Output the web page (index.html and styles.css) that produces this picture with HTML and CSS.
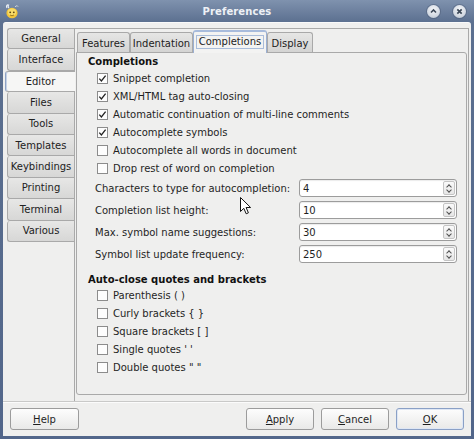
FILE: index.html
```html
<!DOCTYPE html>
<html>
<head>
<meta charset="utf-8">
<link rel="stylesheet" href="styles.css">
</head>
<body>
<div class="window">
  <div class="titlebar">
    <div class="tb-left">
      <svg class="app-icon" width="14" height="15" viewBox="0 0 14 15">
        <path d="M2 4 C1 2 2 0.5 3.5 1 C3 2 3 3 4 4" fill="none" stroke="#e8eef5" stroke-width="1.2"/>
        <path d="M10 3 C11 1.5 12.5 1.5 13 2.5" fill="none" stroke="#d8dee8" stroke-width="1"/>
        <ellipse cx="7" cy="9" rx="5.6" ry="5.2" fill="#f2c53a"/>
        <ellipse cx="7" cy="8" rx="4.2" ry="3.6" fill="#f8dc6a"/>
        <circle cx="5.2" cy="8.3" r="0.9" fill="#5a4410"/>
        <circle cx="8.8" cy="8.3" r="0.9" fill="#5a4410"/>
        <path d="M5 11 Q7 12.5 9 11" fill="none" stroke="#8a6a18" stroke-width="0.8"/>
      </svg>
    </div>
    <div class="title">Preferences</div>
    <div class="tb-right">
      <span class="wbtn">
        <svg width="13" height="13" viewBox="0 0 13 13"><path d="M4 7.5 L6.5 5 L9 7.5" fill="none" stroke="#3c4858" stroke-width="1.6"/></svg>
      </span>
      <span class="wbtn">
        <svg width="13" height="13" viewBox="0 0 13 13"><path d="M4.3 4.3 L8.7 8.7 M8.7 4.3 L4.3 8.7" fill="none" stroke="#3c4858" stroke-width="1.7"/></svg>
      </span>
    </div>
  </div>

  <div class="client">
    <div class="main">
      <div class="vtabs">
        <div class="vtab">General</div>
        <div class="vtab">Interface</div>
        <div class="vtab vtab-active">Editor</div>
        <div class="vtab">Files</div>
        <div class="vtab">Tools</div>
        <div class="vtab">Templates</div>
        <div class="vtab">Keybindings</div>
        <div class="vtab">Printing</div>
        <div class="vtab">Terminal</div>
        <div class="vtab">Various</div>
      </div>
      <div class="page">
        <div class="htabs">
          <div class="htab w-features">Features</div>
          <div class="htab w-indent">Indentation</div>
          <div class="htab htab-active w-compl"><span class="focus">Completions</span></div>
          <div class="htab w-display">Display</div>
        </div>
        <div class="panel">
          <div class="heading h1">Completions</div>
          <div class="crow"><span class="cb"><svg width="11" height="11" viewBox="0 0 11 11"><path d="M2.3 5.6 L4.4 8 L8.6 2.6" fill="none" stroke="#222" stroke-width="1.3"/></svg></span>Snippet completion</div>
          <div class="crow"><span class="cb"><svg width="11" height="11" viewBox="0 0 11 11"><path d="M2.3 5.6 L4.4 8 L8.6 2.6" fill="none" stroke="#222" stroke-width="1.3"/></svg></span>XML/HTML tag auto-closing</div>
          <div class="crow"><span class="cb"><svg width="11" height="11" viewBox="0 0 11 11"><path d="M2.3 5.6 L4.4 8 L8.6 2.6" fill="none" stroke="#222" stroke-width="1.3"/></svg></span>Automatic continuation of multi-line comments</div>
          <div class="crow"><span class="cb"><svg width="11" height="11" viewBox="0 0 11 11"><path d="M2.3 5.6 L4.4 8 L8.6 2.6" fill="none" stroke="#222" stroke-width="1.3"/></svg></span>Autocomplete symbols</div>
          <div class="crow"><span class="cb"></span>Autocomplete all words in document</div>
          <div class="crow"><span class="cb"></span>Drop rest of word on completion</div>

          <div class="srow"><span class="slabel">Characters to type for autocompletion:</span><span class="spin"><span class="sval">4</span><span class="sarrows"><span class="sup"></span><span class="sdown"></span></span></span></div>
          <div class="srow"><span class="slabel">Completion list height:</span><span class="spin"><span class="sval">10</span><span class="sarrows"><span class="sup"></span><span class="sdown"></span></span></span></div>
          <div class="srow"><span class="slabel">Max. symbol name suggestions:</span><span class="spin"><span class="sval">30</span><span class="sarrows"><span class="sup"></span><span class="sdown"></span></span></span></div>
          <div class="srow"><span class="slabel">Symbol list update frequency:</span><span class="spin"><span class="sval">250</span><span class="sarrows"><span class="sup"></span><span class="sdown"></span></span></span></div>

          <div class="heading h2">Auto-close quotes and brackets</div>
          <div class="crow"><span class="cb"></span>Parenthesis ( )</div>
          <div class="crow"><span class="cb"></span>Curly brackets { }</div>
          <div class="crow"><span class="cb"></span>Square brackets [ ]</div>
          <div class="crow"><span class="cb"></span>Single quotes ' '</div>
          <div class="crow"><span class="cb"></span>Double quotes " "</div>
        </div>
      </div>
    </div>
    <div class="sep"></div>
    <div class="buttons">
      <div class="btn"><u>H</u>elp</div>
      <div class="spacer"></div>
      <div class="btn"><u>A</u>pply</div>
      <div class="btn"><u>C</u>ancel</div>
      <div class="btn btn-default"><u>O</u>K</div>
    </div>
  </div>

  <svg class="cursor" width="12" height="18" viewBox="0 0 12 18">
    <path d="M0.5 0.5 L0.5 14.5 L3.8 11.3 L6.2 16.8 L8.4 15.8 L6.1 10.5 L10.6 10.5 Z" fill="#fff" stroke="#111" stroke-width="1" stroke-linejoin="round"/>
  </svg>
</div>
</body>
</html>
```
FILE: styles.css
```css
* { box-sizing: border-box; }
html, body { margin: 0; padding: 0; }
body {
  width: 474px;
  height: 439px;
  overflow: hidden;
  font-family: "DejaVu Sans", "Liberation Sans", sans-serif;
  font-size: 10px;
  color: #1f1f1f;
  background: #50648a;
}
.window {
  width: 474px;
  height: 439px;
  position: relative;
  display: flex;
  flex-direction: column;
  background: linear-gradient(#7f92ae 0px, #5c7090 22px, #52668a 100%);
}
.titlebar {
  height: 22px;
  flex: none;
  display: grid;
  grid-template-columns: 1fr auto 1fr;
  align-items: center;
}
.tb-left { padding-left: 5px; display: flex; align-items: center; }
.app-icon { display: block; margin-top: 1px; }
.title {
  font-weight: bold;
  color: #eef1f6;
  font-size: 10px;
  letter-spacing: 0.1px;
  padding-top: 1px;
}
.tb-right {
  display: flex;
  justify-content: flex-end;
  gap: 13px;
  padding-right: 8px;
}
.wbtn {
  width: 13px;
  height: 13px;
  border-radius: 50%;
  background: radial-gradient(circle at 50% 35%, #f4f6f9 0%, #d4dae3 60%, #aeb8c6 100%);
  box-shadow: 0 0 0 1px rgba(60,75,100,0.35);
  display: block;
}
.wbtn svg { display: block; }

.client {
  flex: 1;
  margin: 0 3px 3px 3px;
  background: #efefee;
  border-top: 1px solid #f9f9f9;
  border-radius: 3px 3px 0 0;
  display: flex;
  flex-direction: column;
}
.main {
  display: flex;
  margin: 5px 2px 0 4px;
  height: 373px;
}
.vtabs {
  width: 67px;
  flex: none;
  display: flex;
  flex-direction: column;
}
.vtab {
  height: 21.4px;
  display: flex;
  align-items: center;
  justify-content: center;
  border: 1px solid #a9a9a9;
  border-top: none;
  border-right: none;
  border-radius: 3px 0 0 3px;
  background: linear-gradient(#e7e7e6, #d7d7d6);
  color: #222;
}
.vtab:first-child { border-top: 1px solid #a9a9a9; }
.vtab-active {
  position: relative;
  z-index: 2;
  margin-left: -2px;
  margin-right: -1px;
  background: #f6f6f5;
  border-left: 1px solid #8ea2c4;
  border-top: 1px solid #a9a9a9;
  box-shadow: inset 1px 0 0 #c5d2e6;
}
.page {
  flex: 1;
  border: 1px solid #a9a9a9;
  border-bottom: none;
  padding: 1px 1px 6px 1px;
  display: flex;
  flex-direction: column;
}
.htabs {
  display: flex;
  align-items: flex-end;
  height: 22px;
  margin-left: 1px;
  flex: none;
}
.htab {
  height: 20px;
  border: 1px solid #a9a9a9;
  border-bottom: none;
  border-radius: 3px 3px 0 0;
  background: linear-gradient(#e6e6e5, #d4d4d3);
  display: flex;
  align-items: center;
  justify-content: center;
  padding-top: 1px;
  color: #222;
}
.w-features { width: 53px; }
.w-indent { width: 63px; }
.w-compl { width: 74px; }
.w-display { width: 46px; }
.htab-active {
  position: relative;
  z-index: 2;
  height: 23px;
  margin-bottom: -1px;
  background: #f3f3f2;
  border-color: #9bb0d3;
  border-top: 2px solid #a7bbdc;
  padding-top: 0;
  padding-bottom: 2px;
}
.focus {
  border: 1px solid #a9bcda;
  padding: 0 2px;
  line-height: 12px;
}
.panel {
  flex: 1;
  border: 1px solid #a9a9a9;
  border-radius: 0 3px 3px 3px;
  padding-left: 11px;
  display: flex;
  flex-direction: column;
}
.heading {
  font-weight: bold;
  color: #111;
  display: flex;
  align-items: center;
}
.h1 { margin-top: 1px; height: 15px; }
.h2 { margin-top: 7px; height: 14px; }
.crow {
  height: 18px;
  display: flex;
  align-items: center;
  padding-left: 9px;
}
.cb {
  width: 11px;
  height: 11px;
  border: 1px solid #8c8c8c;
  background: #fdfdfd;
  margin-right: 5px;
  display: block;
  position: relative;
  flex: none;
}
.cb svg { display: block; margin: -1px 0 0 -1px; }
.srow {
  height: 22px;
  display: flex;
  align-items: center;
  padding-left: 7px;
}
.slabel { flex: 1; }
.spin {
  width: 158px;
  height: 18px;
  margin-right: 9px;
  border: 1px solid #9c9c9c;
  border-radius: 3px;
  background: #fff;
  box-shadow: inset 0 1px 1px rgba(0,0,0,0.08);
  display: flex;
}
.sval { flex: 1; padding-left: 3px; display: flex; align-items: center; }
.sarrows {
  width: 12px;
  margin: 1px 1px 1px 0;
  border: 1px solid #c4c4c4;
  border-radius: 2px;
  background: linear-gradient(#fafafa, #e6e6e6);
  display: flex;
  flex-direction: column;
}
.sup, .sdown { flex: 1; position: relative; }
.sup::after, .sdown::after {
  content: "";
  position: absolute;
  left: 3px;
  width: 3px;
  height: 3px;
  border-left: 1px solid #505050;
  border-top: 1px solid #505050;
}
.sup::after { top: 3px; transform: rotate(45deg); }
.sdown::after { top: 0px; transform: rotate(225deg); }
.sep {
  height: 2px;
  border-top: 1px solid #c9c9c8;
  border-bottom: 1px solid #fbfbfb;
  flex: none;
}
.buttons {
  display: flex;
  gap: 7px;
  padding: 5px 7px 0 7px;
}
.spacer { flex: 1; }
.btn {
  width: 68px;
  height: 22px;
  border: 1px solid #9c9c9c;
  border-radius: 3px;
  background: linear-gradient(#fdfdfd, #e9e9e8);
  display: flex;
  align-items: center;
  justify-content: center;
  color: #1f1f1f;
}
.btn:first-child { width: 69px; }
.btn-default {
  border-color: #8aa0c6;
  box-shadow: inset 0 0 0 1px #dfe7f4;
}
.cursor {
  position: absolute;
  left: 240px;
  top: 197px;
}
```
